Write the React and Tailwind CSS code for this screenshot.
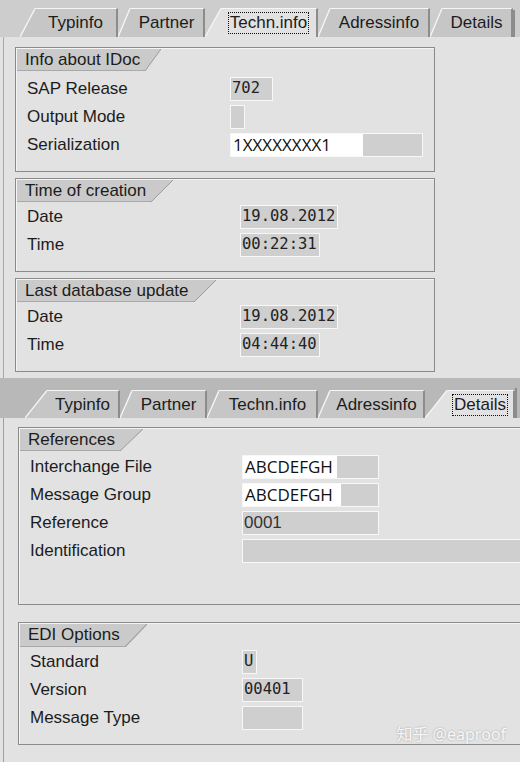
import React from 'react';

const MONO = "font-['DejaVu_Sans_Mono',monospace]";
const OPEN = "font-['Open_Sans',sans-serif]";

const topTabs = [
  { label: 'Typinfo', w: 'w-[98px]', slant: 15 },
  { label: 'Partner', w: 'w-[87px]', slant: 12 },
  { label: 'Techn.info', w: 'w-[113px]', slant: 16, active: true },
  { label: 'Adressinfo', w: 'w-[112px]', slant: 12 },
  { label: 'Details', w: 'w-[83px]', slant: 12 },
];

const bottomTabs = [
  { label: 'Typinfo', w: 'w-[95px]', slant: 22 },
  { label: 'Partner', w: 'w-[87px]', slant: 12 },
  { label: 'Techn.info', w: 'w-[111px]', slant: 12 },
  { label: 'Adressinfo', w: 'w-[107px]', slant: 12 },
  { label: 'Details', w: 'w-[90px]', slant: 22, active: true },
];

// one SAP style tab with a slanted left edge
const Tab = ({ label, w, slant, active, h }) => {
  const fill = active ? '#e2e2e2' : '#c6c6c6';
  return (
    <div className={`flex shrink-0 ${w}`}>
      <svg width={slant} height={h} className="block shrink-0">
        <polygon points={`0,${h} ${slant},0 ${slant},${h}`} fill={fill} />
        <line x1="0" y1={h} x2={slant} y2="0.5" stroke="#f6f6f6" strokeWidth="1.3" />
      </svg>
      <div
        className={`flex-1 flex items-center justify-center border-t border-t-[#f6f6f6] border-r-2 border-r-[#8c8c8c] ${
          active ? 'bg-[#e2e2e2]' : 'bg-[#c6c6c6]'
        }`}
      >
        <span
          className={`leading-[20px] ${
            active ? 'border border-dotted border-[#111] px-[1px]' : ''
          }`}
        >
          {label}
        </span>
      </div>
    </div>
  );
};

const TabStrip = ({ tabs, h, className }) => (
  <div className={`flex items-end ${className}`}>
    {tabs.map((t) => (
      <Tab key={t.label} {...t} h={h} />
    ))}
    <div className="w-[2px] self-stretch mt-[10px] bg-[#8c8c8c]" />
  </div>
);

const Group = ({ title, slant = 20, hh = 'h-[22px]', className, children }) => (
  <div
    className={`border border-[#8a8a8a] shadow-[inset_1px_1px_0_#f5f5f5] pt-[1px] ${className}`}
  >
    <div className={`flex ${hh}`}>
      <div className="ml-[1px] bg-[#cacaca] pl-[8px] pr-[5px] flex items-center border-b border-[#a9a9a9]">
        {title}
      </div>
      <svg width={slant} height="100%" viewBox={`0 0 ${slant} 22`} preserveAspectRatio="none" className="block">
        <polygon points={`0,0 ${slant},0 0,22`} fill="#cacaca" />
        <line x1="0" y1="22" x2={slant} y2="0" stroke="#9a9a9a" strokeWidth="1" />
      </svg>
    </div>
    {children}
  </div>
);

const Row = ({ label, lw, children }) => (
  <div className="flex items-center h-[28px] pl-[11px]">
    <div className={`shrink-0 ${lw}`}>{label}</div>
    {children}
  </div>
);

const Field = ({ w, mono, children, className = '' }) => (
  <div
    className={`h-[24px] bg-[#cfcfcf] border border-[#f7f7f7] flex items-center pl-[1px] text-[#222] ${
      mono ? `${MONO} text-[15.5px]` : ''
    } ${w} ${className}`}
  >
    {children}
  </div>
);

const WhiteField = ({ w, white, children }) => (
  <div className={`h-[24px] bg-[#cfcfcf] border border-[#f7f7f7] flex ${w}`}>
    <div className={`bg-white h-full flex items-center pl-[2px] ${OPEN} text-[17px] text-[#111] ${white}`}>
      {children}
    </div>
  </div>
);

export default function App() {
  return (
    <div className="relative w-[520px] h-[762px] overflow-hidden bg-[#e2e2e2] font-['Liberation_Sans',Arial,sans-serif] text-[17px] text-[#1c1c1c]">
      {/* first screen: Techn.info */}
      <div className="h-[378px] flex flex-col">
        <TabStrip tabs={topTabs} h={29} className="h-[37px] bg-[#cdcdcd] pl-[20px]" />
        <div className="flex-1 ml-[3px] border-l border-[#a8a8a8] pl-[11px] pt-[10px] flex flex-col gap-[6px]">
          <Group title="Info about IDoc" slant={16} className="w-[420px] h-[125px]">
            <div className="mt-[4px]">
              <Row label="SAP Release" lw="w-[203px]">
                <Field w="w-[43px]" mono>702</Field>
              </Row>
              <Row label="Output Mode" lw="w-[203px]">
                <Field w="w-[15px]" />
              </Row>
              <Row label="Serialization" lw="w-[203px]">
                <WhiteField w="w-[193px]" white="w-[132px]">1XXXXXXXX1</WhiteField>
              </Row>
            </div>
          </Group>
          <Group title="Time of creation" slant={22} className="w-[420px] h-[94px]">
            <div className="mt-[1px]">
              <Row label="Date" lw="w-[213px]">
                <Field w="w-[98px]" mono>19.08.2012</Field>
              </Row>
              <Row label="Time" lw="w-[213px]">
                <Field w="w-[80px]" mono>00:22:31</Field>
              </Row>
            </div>
          </Group>
          <Group title="Last database update" slant={22} className="w-[420px] h-[94px]">
            <div className="mt-[1px]">
              <Row label="Date" lw="w-[213px]">
                <Field w="w-[98px]" mono>19.08.2012</Field>
              </Row>
              <Row label="Time" lw="w-[213px]">
                <Field w="w-[80px]" mono>04:44:40</Field>
              </Row>
            </div>
          </Group>
        </div>
      </div>

      {/* second screen: Details */}
      <div className="h-[384px] flex flex-col">
        <TabStrip tabs={bottomTabs} h={28} className="h-[40px] bg-[#b8b8b8] pl-[25px]" />
        <div className="flex-1 ml-[3px] border-l border-[#a0a0a0] pl-[14px] pt-[9px] flex flex-col gap-[17px]">
          <Group title="References" slant={23} className="w-[520px] h-[178px]">
            <div className="mt-[2px]">
              <Row label="Interchange File" lw="w-[212px]">
                <WhiteField w="w-[137px]" white="w-[94px]">ABCDEFGH</WhiteField>
              </Row>
              <Row label="Message Group" lw="w-[212px]">
                <WhiteField w="w-[137px]" white="w-[98px]">ABCDEFGH</WhiteField>
              </Row>
              <Row label="Reference" lw="w-[212px]">
                <Field w="w-[137px]" className="text-[#333] pl-[1px]">0001</Field>
              </Row>
              <Row label="Identification" lw="w-[212px]">
                <Field w="flex-1" />
              </Row>
            </div>
          </Group>
          <Group title="EDI Options" slant={22} hh="h-[23px]" className="w-[520px] h-[123px]">
            <div className="mt-[1px]">
              <Row label="Standard" lw="w-[212px]">
                <Field w="w-[15px]" mono>U</Field>
              </Row>
              <Row label="Version" lw="w-[212px]">
                <Field w="w-[61px]" mono>00401</Field>
              </Row>
              <Row label="Message Type" lw="w-[212px]">
                <Field w="w-[61px]" />
              </Row>
            </div>
          </Group>
        </div>
      </div>

      {/* watermark */}
      <div className="absolute right-[14px] bottom-[16px] text-[16px] text-white/90 [text-shadow:0_0_2px_#9a9a9a] font-['Noto_Sans','Noto_Sans_CJK_SC',sans-serif]">
        知乎 @eaproof
      </div>
    </div>
  );
}
